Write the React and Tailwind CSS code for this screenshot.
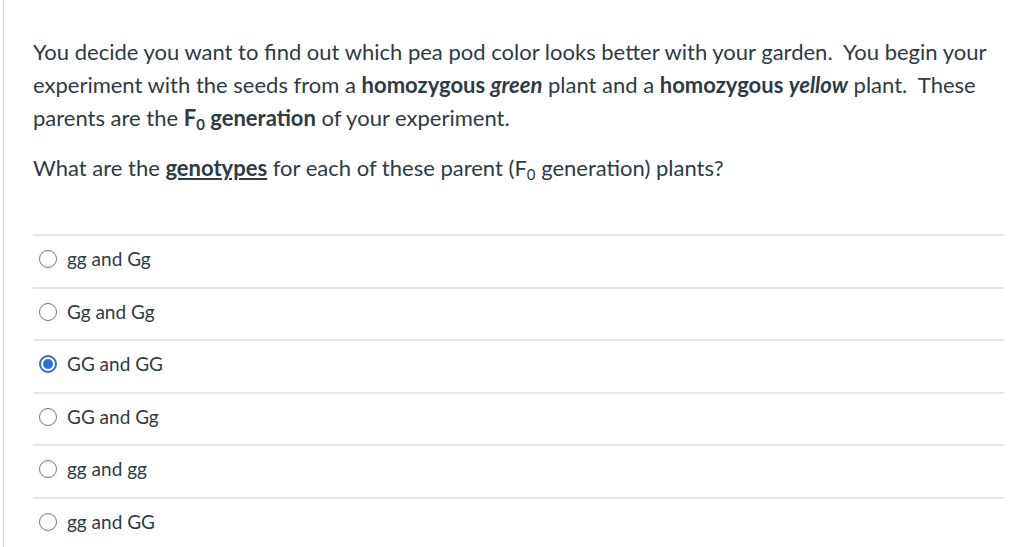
import React, { useState } from "react";

const options = ["gg and Gg", "Gg and Gg", "GG and GG", "GG and Gg", "gg and gg", "gg and GG"];

const App = () => {
  const [selected, setSelected] = useState(2);

  return (
    <div className="w-[1024px] h-[547px] overflow-hidden bg-white" style={{ fontFamily: "Lato, 'Open Sans', sans-serif" }}>
      <div className="ml-[3px] h-full border-l border-[#c7cdd1] pl-[29px] pr-[20px] pt-[35px] text-[#2d3b45]">
        <p className="text-[22px] leading-[33px]">
          You decide you want to find out which pea pod color looks better with your garden.&nbsp; You begin your
          experiment with the seeds from a <b>homozygous <i>green</i></b> plant and a <b>homozygous <i>yellow</i></b> plant.&nbsp; These
          parents are the <b>F<sub className="text-[15px] leading-none">0</sub> generation</b> of your experiment.
        </p>
        <p className="mt-[17px] text-[22px] leading-[33px]">
          What are the <b className="underline underline-offset-2">genotypes</b> for each of these parent (F<sub className="text-[15px] leading-none">0</sub> generation) plants?
        </p>

        <div className="mt-[50px]">
          {options.map((opt, i) => (
            <div key={opt} className="flex h-[52.5px] items-center border-t-2 border-[#e6e6e6] pb-[4px] pl-[6px]">
              <button
                onClick={() => setSelected(i)}
                className={`flex h-[18px] w-[18px] items-center justify-center rounded-full border ${
                  selected === i ? "border-2 border-[#2b6fd9]" : "border-[#6b7780]"
                }`}
              >
                {selected === i && <span className="h-[10px] w-[10px] rounded-full bg-[#2b6fd9]" />}
              </button>
              <span className="ml-[10px] text-[19px]">{opt}</span>
            </div>
          ))}
        </div>
      </div>
    </div>
  );
};

export default App;
